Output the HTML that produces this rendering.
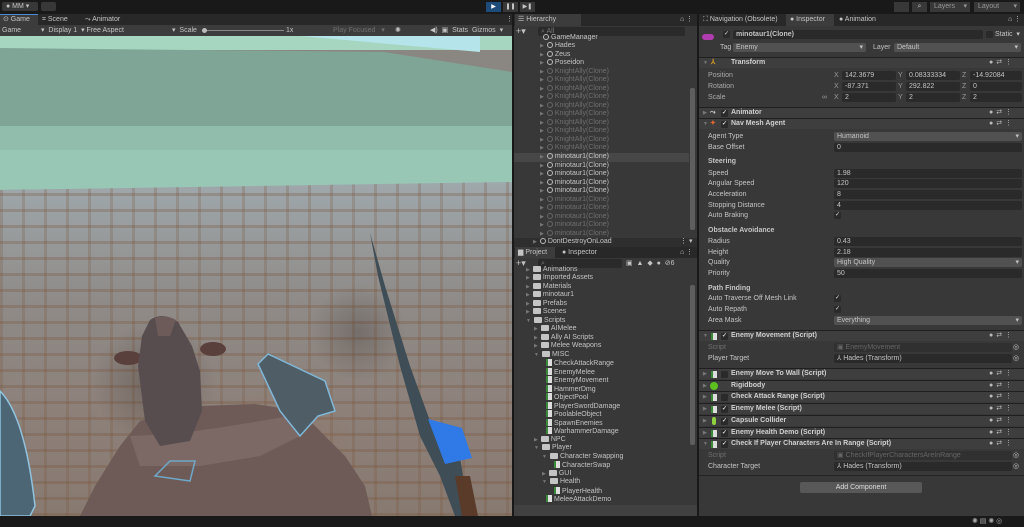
<!DOCTYPE html>
<html><head><meta charset="utf-8"><style>
*{margin:0;padding:0;box-sizing:border-box}
body{width:1024px;height:527px;overflow:hidden;background:#191919;font-family:"Liberation Sans",sans-serif;font-size:7px;color:#c4c4c4;position:relative}
.a{position:absolute;white-space:nowrap}
.r{position:absolute;height:8px;line-height:8px;white-space:nowrap}
.dim{color:#6f6f6f}
.fld{position:absolute;height:9px;background:#2a2a2a;border-radius:2px;line-height:9px;padding-left:3px;color:#c4c4c4}
.dd{background:#515151}
.hdr{position:absolute;left:699px;width:325px;height:11px;background:#3e3e3e;border-top:1px solid #1f1f1f;line-height:10px;font-weight:bold;color:#d0d0d0}
.ck{position:absolute;width:7px;height:7px;background:#2a2a2a;border-radius:1px;font-size:6px;line-height:7px;text-align:center;color:#ddd}
.ico{display:inline-block;width:6px;height:6px;border:1px solid #bbb;border-radius:50%;vertical-align:-1px;margin-right:2px}
.fo{display:inline-block;width:8px;height:6px;background:#c4c4c4;vertical-align:-1px;margin-right:2px;border-radius:1px}
.sc{display:inline-block;width:6px;height:7px;background:#ddd;vertical-align:-1px;margin-right:2px;border-left:2px solid #3a8a3a}
.tri{color:#777;font-size:5px;margin-right:3px}
.hb{position:absolute;left:290px;top:0;color:#bbb;font-weight:normal;letter-spacing:3px}
</style></head><body>
<!-- top toolbar -->
<div class="a" style="left:2px;top:2px;width:36px;height:9px;background:#383838;border-radius:2px;line-height:9px;padding-left:4px">● MM ▾</div>
<div class="a" style="left:41px;top:2px;width:15px;height:9px;background:#383838;border-radius:2px"></div>
<div class="a" style="left:486px;top:2px;width:15px;height:10px;background:#1e4c7a;color:#fff;text-align:center;line-height:10px;font-size:6px">▶</div>
<div class="a" style="left:503px;top:2px;width:15px;height:10px;background:#383838;text-align:center;line-height:10px;font-size:6px">❚❚</div>
<div class="a" style="left:520px;top:2px;width:15px;height:10px;background:#383838;text-align:center;line-height:10px;font-size:6px">▶❚</div>
<div class="a" style="left:894px;top:2px;width:15px;height:10px;background:#383838"></div>
<div class="a" style="left:912px;top:2px;width:15px;height:10px;background:#383838;text-align:center;line-height:10px">⌕</div>
<div class="a" style="left:930px;top:2px;width:40px;height:10px;background:#383838;line-height:10px;padding-left:4px;color:#999">Layers <span style="float:right;margin-right:3px">▾</span></div>
<div class="a" style="left:974px;top:2px;width:46px;height:10px;background:#383838;line-height:10px;padding-left:4px;color:#999">Layout <span style="float:right;margin-right:3px">▾</span></div>

<!-- Game panel -->
<div class="a" style="left:0;top:14px;width:512px;height:11px;background:#282828"></div>
<div class="a" style="left:0;top:14px;width:38px;height:11px;background:#3c3c3c;border-top:1px solid #4a8ad0;line-height:10px;padding-left:3px">⊙ Game</div>
<div class="a" style="left:42px;top:14px;line-height:11px">⌗ Scene</div>
<div class="a" style="left:85px;top:14px;line-height:11px">⤳ Animator</div>
<div class="a" style="left:506px;top:14px;line-height:11px">⋮</div>
<div class="a" style="left:0;top:25px;width:512px;height:11px;background:#3c3c3c;line-height:11px"></div>
<div class="a" style="left:2px;top:25px;line-height:11px">Game</div>
<div class="a" style="left:41px;top:25px;line-height:11px">▾ &nbsp;Display 1 &nbsp;▾ Free Aspect</div>
<div class="a" style="left:172px;top:25px;line-height:11px">▾ &nbsp;Scale</div>
<div class="a" style="left:202px;top:30px;width:82px;height:1px;background:#888"></div>
<div class="a" style="left:202px;top:28px;width:5px;height:5px;border-radius:50%;background:#bbb"></div>
<div class="a" style="left:286px;top:25px;line-height:11px">1x</div>
<div class="a dim" style="left:333px;top:25px;line-height:11px">Play Focused &nbsp;&nbsp;▾</div>
<div class="a" style="left:395px;top:25px;line-height:11px">✺</div>
<div class="a" style="left:430px;top:25px;line-height:11px">◀) &nbsp;▣ &nbsp;Stats &nbsp;Gizmos &nbsp;▾</div>
<!-- scene -->
<div class="a" style="left:0;top:36px;width:512px;height:480px;overflow:hidden;background:#8a8782">
 <div class="a" style="left:0;top:0;width:512px;height:14px;background:#a6d6c0"></div>
 <div class="a" style="left:300px;top:0;width:180px;height:16px;background:#b5e5ea;clip-path:polygon(0 0,100% 0,100% 100%,30% 30%)"></div>
 <div class="a" style="left:0;top:12px;width:512px;height:80px;background:#7fa596;clip-path:polygon(0 0,75% 5%,100% 30%,100% 100%,0 100%)"></div>
 <div class="a" style="left:0;top:90px;width:512px;height:24px;background:#90bdac"></div>
 <div class="a" style="left:0;top:114px;width:512px;height:40px;background:#99c7b5;clip-path:polygon(0 0,100% 0,100% 85%,0 100%)"></div>
 <div class="a" style="left:0;top:146px;width:512px;height:334px;background:
  radial-gradient(circle at 30% 60%,rgba(60,50,45,.35),transparent 15%),
  radial-gradient(circle at 70% 45%,rgba(60,50,45,.3),transparent 12%),
  radial-gradient(circle at 55% 85%,rgba(150,100,70,.35),transparent 20%),
  repeating-linear-gradient(90deg,rgba(120,85,60,.25) 0 3px,transparent 3px 22px),
  repeating-linear-gradient(0deg,rgba(120,85,60,.3) 0 3px,transparent 3px 16px),
  linear-gradient(#9fa8ac,#8f8b88 35%,#8d8079 70%,#887a70);clip-path:polygon(0 8px,100% 0,100% 100%,0 100%)"></div>
 <svg class="a" style="left:0;top:0" width="512" height="480">
  <path d="M80 480 L95 450 L120 410 L140 385 L200 370 L255 368 L300 375 L320 395 L345 420 L365 450 L372 480 Z" fill="#6e5b57"/>
  <path d="M130 400 L175 398 L230 390 L290 380 L300 400 L260 420 L200 430 L140 430 Z" fill="#7c6965"/>
  <ellipse cx="128" cy="322" rx="14" ry="7" fill="#5a403c"/>
  <ellipse cx="213" cy="313" rx="13" ry="7" fill="#5a403c"/>
  <path d="M150 284 Q163 275 178 286 L192 310 L200 335 L202 375 L190 405 L160 410 L145 385 L138 330 L142 300 Z" fill="#574d4f"/>
  <path d="M155 282 Q165 278 176 284 L170 300 L158 300 Z" fill="#6d5b5a"/>
  <path d="M258 328 L268 318 L325 345 L335 375 L318 380 L300 400 L280 375 Z" fill="#4e5d66" stroke="#7fb8d8" stroke-width="1.5"/>
  <path d="M155 440 L170 425 L195 425 L190 445 Z" fill="none" stroke="#6fa7c8" stroke-width="1.5"/>
  <path d="M0 355 Q25 380 35 470 L30 480 L0 480 Z" fill="#4d6675" stroke="#8fc3de" stroke-width="1.5"/>
  <path d="M370 197 L385 250 L410 330 L430 385 L458 410 L470 480 L455 480 L440 440 L420 400 L400 330 L378 240 Z" fill="#3f4d56"/>
  <path d="M428 383 L462 392 L472 422 L445 428 Z" fill="#2f7ae6"/>
  <path d="M455 440 L470 440 L478 480 L462 480 Z" fill="#5a3a28"/>
 </svg>
</div>

<!-- divider -->
<div class="a" style="left:512px;top:14px;width:2px;height:502px;background:#191919"></div>
<!-- Hierarchy -->
<div class="a" style="left:514px;top:14px;width:183px;height:232px;background:#383838"></div>
<div class="a" style="left:514px;top:14px;width:183px;height:12px;background:#282828"></div>
<div class="a" style="left:515px;top:14px;width:66px;height:12px;background:#3c3c3c;line-height:12px;padding-left:3px">☰ Hierarchy</div>
<div class="a" style="left:680px;top:14px;line-height:12px">⌂ ⋮</div>
<div class="a" style="left:516px;top:27px;line-height:9px;font-size:9px">+▾</div>
<div class="a" style="left:538px;top:27px;width:147px;height:9px;background:#2a2a2a;border-radius:2px;line-height:9px;padding-left:3px;color:#777">⌕ All</div>
<div class="a" style="left:690px;top:40px;width:5px;height:200px"><div style="margin-top:48px;height:142px;background:#5e5e5e;border-radius:2px"></div></div>
<div class="a" style="left:514px;top:153px;width:175px;height:9px;background:#474747"></div>
<div class="r" style="left:540px;top:34px"><span class="tri"> </span><span class="ico"></span>GameManager</div>
<div class="r" style="left:540px;top:42px"><span class="tri">▶</span><span class="ico"></span>Hades</div>
<div class="r" style="left:540px;top:51px"><span class="tri">▶</span><span class="ico"></span>Zeus</div>
<div class="r" style="left:540px;top:59px"><span class="tri">▶</span><span class="ico"></span>Poseidon</div>
<div class="r dim" style="left:540px;top:68px"><span class="tri">▶</span><span class="ico" style="border-color:#666"></span>KnightAlly(Clone)</div>
<div class="r dim" style="left:540px;top:76px"><span class="tri">▶</span><span class="ico" style="border-color:#666"></span>KnightAlly(Clone)</div>
<div class="r dim" style="left:540px;top:85px"><span class="tri">▶</span><span class="ico" style="border-color:#666"></span>KnightAlly(Clone)</div>
<div class="r dim" style="left:540px;top:93px"><span class="tri">▶</span><span class="ico" style="border-color:#666"></span>KnightAlly(Clone)</div>
<div class="r dim" style="left:540px;top:102px"><span class="tri">▶</span><span class="ico" style="border-color:#666"></span>KnightAlly(Clone)</div>
<div class="r dim" style="left:540px;top:110px"><span class="tri">▶</span><span class="ico" style="border-color:#666"></span>KnightAlly(Clone)</div>
<div class="r dim" style="left:540px;top:119px"><span class="tri">▶</span><span class="ico" style="border-color:#666"></span>KnightAlly(Clone)</div>
<div class="r dim" style="left:540px;top:127px"><span class="tri">▶</span><span class="ico" style="border-color:#666"></span>KnightAlly(Clone)</div>
<div class="r dim" style="left:540px;top:136px"><span class="tri">▶</span><span class="ico" style="border-color:#666"></span>KnightAlly(Clone)</div>
<div class="r dim" style="left:540px;top:144px"><span class="tri">▶</span><span class="ico" style="border-color:#666"></span>KnightAlly(Clone)</div>
<div class="r" style="left:540px;top:153px"><span class="tri">▶</span><span class="ico"></span>minotaur1(Clone)</div>
<div class="r" style="left:540px;top:162px"><span class="tri">▶</span><span class="ico"></span>minotaur1(Clone)</div>
<div class="r" style="left:540px;top:170px"><span class="tri">▶</span><span class="ico"></span>minotaur1(Clone)</div>
<div class="r" style="left:540px;top:179px"><span class="tri">▶</span><span class="ico"></span>minotaur1(Clone)</div>
<div class="r" style="left:540px;top:187px"><span class="tri">▶</span><span class="ico"></span>minotaur1(Clone)</div>
<div class="r dim" style="left:540px;top:196px"><span class="tri">▶</span><span class="ico" style="border-color:#666"></span>minotaur1(Clone)</div>
<div class="r dim" style="left:540px;top:204px"><span class="tri">▶</span><span class="ico" style="border-color:#666"></span>minotaur1(Clone)</div>
<div class="r dim" style="left:540px;top:213px"><span class="tri">▶</span><span class="ico" style="border-color:#666"></span>minotaur1(Clone)</div>
<div class="r dim" style="left:540px;top:221px"><span class="tri">▶</span><span class="ico" style="border-color:#666"></span>minotaur1(Clone)</div>
<div class="r dim" style="left:540px;top:230px"><span class="tri">▶</span><span class="ico" style="border-color:#666"></span>minotaur1(Clone)</div>
<div class="a" style="left:514px;top:238px;width:183px;height:9px;background:#2e2e2e"></div>
<div class="r" style="left:533px;top:238px"><span class="tri">▶</span><span class="ico"></span>DontDestroyOnLoad</div>
<div class="a" style="left:680px;top:238px;line-height:8px">⋮ ▾</div>

<!-- Project -->
<div class="a" style="left:514px;top:247px;width:183px;height:269px;background:#383838"></div>
<div class="a" style="left:514px;top:247px;width:183px;height:11px;background:#282828"></div>
<div class="a" style="left:515px;top:247px;width:40px;height:11px;background:#3c3c3c;line-height:11px;padding-left:3px">▆ Project</div>
<div class="a" style="left:562px;top:247px;line-height:11px">● Inspector</div>
<div class="a" style="left:680px;top:247px;line-height:11px">⌂ ⋮</div>
<div class="a" style="left:516px;top:259px;line-height:9px;font-size:9px">+▾</div>
<div class="a" style="left:538px;top:259px;width:84px;height:9px;background:#2a2a2a;border-radius:2px;line-height:9px;padding-left:3px;color:#777">⌕</div>
<div class="a" style="left:626px;top:259px;line-height:9px">▣ &nbsp;▲ &nbsp;◆ &nbsp;● &nbsp;⊘6</div>
<div class="a" style="left:690px;top:285px;width:5px;height:160px;background:#5e5e5e;border-radius:2px"></div>
<div class="r" style="left:526px;top:266px"><span class="tri">▶</span><span class="fo"></span>Animations</div>
<div class="r" style="left:526px;top:274px"><span class="tri">▶</span><span class="fo"></span>Imported Assets</div>
<div class="r" style="left:526px;top:283px"><span class="tri">▶</span><span class="fo"></span>Materials</div>
<div class="r" style="left:526px;top:291px"><span class="tri">▶</span><span class="fo"></span>minotaur1</div>
<div class="r" style="left:526px;top:300px"><span class="tri">▶</span><span class="fo"></span>Prefabs</div>
<div class="r" style="left:526px;top:308px"><span class="tri">▶</span><span class="fo"></span>Scenes</div>
<div class="r" style="left:526px;top:317px"><span class="tri">▼</span><span class="fo"></span>Scripts</div>
<div class="r" style="left:534px;top:325px"><span class="tri">▶</span><span class="fo"></span>AIMelee</div>
<div class="r" style="left:534px;top:334px"><span class="tri">▶</span><span class="fo"></span>Ally AI Scripts</div>
<div class="r" style="left:534px;top:342px"><span class="tri">▶</span><span class="fo"></span>Melee Weapons</div>
<div class="r" style="left:534px;top:351px"><span class="tri">▼</span><span class="fo"></span>MISC</div>
<div class="r" style="left:546px;top:359px"><span class="sc"></span>CheckAttackRange</div>
<div class="r" style="left:546px;top:368px"><span class="sc"></span>EnemyMelee</div>
<div class="r" style="left:546px;top:376px"><span class="sc"></span>EnemyMovement</div>
<div class="r" style="left:546px;top:385px"><span class="sc"></span>HammerDmg</div>
<div class="r" style="left:546px;top:393px"><span class="sc"></span>ObjectPool</div>
<div class="r" style="left:546px;top:402px"><span class="sc"></span>PlayerSwordDamage</div>
<div class="r" style="left:546px;top:410px"><span class="sc"></span>PoolableObject</div>
<div class="r" style="left:546px;top:419px"><span class="sc"></span>SpawnEnemies</div>
<div class="r" style="left:546px;top:427px"><span class="sc"></span>WarhammerDamage</div>
<div class="r" style="left:534px;top:436px"><span class="tri">▶</span><span class="fo"></span>NPC</div>
<div class="r" style="left:534px;top:444px"><span class="tri">▼</span><span class="fo"></span>Player</div>
<div class="r" style="left:542px;top:453px"><span class="tri">▼</span><span class="fo"></span>Character Swapping</div>
<div class="r" style="left:554px;top:461px"><span class="sc"></span>CharacterSwap</div>
<div class="r" style="left:542px;top:470px"><span class="tri">▶</span><span class="fo"></span>GUI</div>
<div class="r" style="left:542px;top:478px"><span class="tri">▼</span><span class="fo"></span>Health</div>
<div class="r" style="left:554px;top:487px"><span class="sc"></span>PlayerHealth</div>
<div class="r" style="left:546px;top:495px"><span class="sc"></span>MeleeAttackDemo</div>
<div class="a" style="left:514px;top:505px;width:183px;height:11px;background:#414141"></div>

<div class="a" style="left:697px;top:14px;width:2px;height:502px;background:#191919"></div>
<!-- Inspector -->
<div class="a" style="left:699px;top:14px;width:325px;height:502px;background:#383838"></div>
<div class="a" style="left:699px;top:14px;width:325px;height:12px;background:#282828"></div>
<div class="a" style="left:703px;top:14px;line-height:12px">⛶ Navigation (Obsolete)</div>
<div class="a" style="left:786px;top:14px;width:48px;height:12px;background:#3c3c3c;line-height:12px;padding-left:4px">● Inspector</div>
<div class="a" style="left:839px;top:14px;line-height:12px">● Animation</div>
<div class="a" style="left:1008px;top:14px;line-height:12px">⌂ ⋮</div>
<div class="a" style="left:702px;top:34px;width:12px;height:6px;border-radius:3px;background:#b03cb0"></div>
<div class="ck" style="left:723px;top:31px">✓</div>
<div class="fld" style="left:733px;top:30px;width:250px;font-weight:bold">minotaur1(Clone)</div>
<div class="ck" style="left:986px;top:31px"></div>
<div class="a" style="left:995px;top:30px;line-height:9px">Static &nbsp;▾</div>
<div class="a" style="left:720px;top:43px;line-height:9px">Tag</div>
<div class="fld dd" style="left:733px;top:43px;width:133px">Enemy<span style="float:right;margin-right:3px">▾</span></div>
<div class="a" style="left:873px;top:43px;line-height:9px">Layer</div>
<div class="fld dd" style="left:894px;top:43px;width:127px">Default<span style="float:right;margin-right:3px">▾</span></div>

<div class="hdr" style="top:57px"><span class="a" style="left:4px;color:#777;font-size:5px">▼</span><span class="a" style="left:12px;color:#e0a020">⅄</span><span class="a" style="left:32px">Transform</span><span class="hb">●⇄⋮</span></div>
<div class="a" style="left:708px;top:72px;line-height:8px;color:#aaa">Position</div>
<div class="a" style="left:708px;top:83px;line-height:8px;color:#aaa">Rotation</div>
<div class="a" style="left:708px;top:94px;line-height:8px;color:#aaa">Scale</div>
<div class="a" style="left:822px;top:94px;line-height:8px;color:#999">∞</div>
<div class="a" style="left:834px;top:72px;line-height:8px;color:#999">X</div><div class="fld" style="left:842px;top:71px;width:54px">142.3679</div>
<div class="a" style="left:898px;top:72px;line-height:8px;color:#999">Y</div><div class="fld" style="left:906px;top:71px;width:54px">0.08333334</div>
<div class="a" style="left:962px;top:72px;line-height:8px;color:#999">Z</div><div class="fld" style="left:970px;top:71px;width:52px">-14.92084</div>
<div class="a" style="left:834px;top:83px;line-height:8px;color:#999">X</div><div class="fld" style="left:842px;top:82px;width:54px">-87.371</div>
<div class="a" style="left:898px;top:83px;line-height:8px;color:#999">Y</div><div class="fld" style="left:906px;top:82px;width:54px">292.822</div>
<div class="a" style="left:962px;top:83px;line-height:8px;color:#999">Z</div><div class="fld" style="left:970px;top:82px;width:52px">0</div>
<div class="a" style="left:834px;top:94px;line-height:8px;color:#999">X</div><div class="fld" style="left:842px;top:93px;width:54px">2</div>
<div class="a" style="left:898px;top:94px;line-height:8px;color:#999">Y</div><div class="fld" style="left:906px;top:93px;width:54px">2</div>
<div class="a" style="left:962px;top:94px;line-height:8px;color:#999">Z</div><div class="fld" style="left:970px;top:93px;width:52px">2</div>

<div class="hdr" style="top:107px"><span class="a" style="left:4px;color:#777;font-size:5px">▶</span><span class="a" style="left:11px">⤳</span><span class="ck" style="left:22px;top:2px">✓</span><span class="a" style="left:32px">Animator</span><span class="hb">●⇄⋮</span></div>
<div class="hdr" style="top:118px"><span class="a" style="left:4px;color:#777;font-size:5px">▼</span><span class="a" style="left:11px;color:#e06a30">✦</span><span class="ck" style="left:22px;top:2px">✓</span><span class="a" style="left:32px">Nav Mesh Agent</span><span class="hb">●⇄⋮</span></div>
<div class="a" style="left:708px;top:133px;line-height:8px">Agent Type</div><div class="fld dd" style="left:834px;top:132px;width:188px">Humanoid<span style="float:right;margin-right:3px">▾</span></div>
<div class="a" style="left:708px;top:144px;line-height:8px">Base Offset</div><div class="fld" style="left:834px;top:143px;width:188px">0</div>
<div class="a" style="left:708px;top:158px;line-height:8px;font-weight:bold">Steering</div>
<div class="a" style="left:708px;top:170px;line-height:8px">Speed</div><div class="fld" style="left:834px;top:169px;width:188px">1.98</div>
<div class="a" style="left:708px;top:180px;line-height:8px">Angular Speed</div><div class="fld" style="left:834px;top:179px;width:188px">120</div>
<div class="a" style="left:708px;top:191px;line-height:8px">Acceleration</div><div class="fld" style="left:834px;top:190px;width:188px">8</div>
<div class="a" style="left:708px;top:202px;line-height:8px">Stopping Distance</div><div class="fld" style="left:834px;top:201px;width:188px">4</div>
<div class="a" style="left:708px;top:212px;line-height:8px">Auto Braking</div><div class="ck" style="left:834px;top:212px">✓</div>
<div class="a" style="left:708px;top:227px;line-height:8px;font-weight:bold">Obstacle Avoidance</div>
<div class="a" style="left:708px;top:238px;line-height:8px">Radius</div><div class="fld" style="left:834px;top:237px;width:188px">0.43</div>
<div class="a" style="left:708px;top:249px;line-height:8px">Height</div><div class="fld" style="left:834px;top:248px;width:188px">2.18</div>
<div class="a" style="left:708px;top:259px;line-height:8px">Quality</div><div class="fld dd" style="left:834px;top:258px;width:188px">High Quality<span style="float:right;margin-right:3px">▾</span></div>
<div class="a" style="left:708px;top:270px;line-height:8px">Priority</div><div class="fld" style="left:834px;top:269px;width:188px">50</div>
<div class="a" style="left:708px;top:285px;line-height:8px;font-weight:bold">Path Finding</div>
<div class="a" style="left:708px;top:295px;line-height:8px">Auto Traverse Off Mesh Link</div><div class="ck" style="left:834px;top:295px">✓</div>
<div class="a" style="left:708px;top:306px;line-height:8px">Auto Repath</div><div class="ck" style="left:834px;top:306px">✓</div>
<div class="a" style="left:708px;top:317px;line-height:8px">Area Mask</div><div class="fld dd" style="left:834px;top:316px;width:188px">Everything<span style="float:right;margin-right:3px">▾</span></div>

<div class="hdr" style="top:330px"><span class="a" style="left:4px;color:#777;font-size:5px">▼</span><span class="sc a" style="left:12px;top:2px"></span><span class="ck" style="left:22px;top:2px">✓</span><span class="a" style="left:32px">Enemy Movement (Script)</span><span class="hb">●⇄⋮</span></div>
<div class="a dim" style="left:708px;top:344px;line-height:8px">Script</div><div class="fld" style="left:834px;top:343px;width:178px;color:#666;background:#303030">▣ EnemyMovement</div><div class="a" style="left:1013px;top:343px;line-height:9px">◎</div>
<div class="a" style="left:708px;top:355px;line-height:8px">Player Target</div><div class="fld" style="left:834px;top:354px;width:178px">⅄ Hades (Transform)</div><div class="a" style="left:1013px;top:354px;line-height:9px">◎</div>

<div class="hdr" style="top:368px"><span class="a" style="left:4px;color:#777;font-size:5px">▶</span><span class="sc a" style="left:12px;top:2px"></span><span class="ck" style="left:22px;top:2px"></span><span class="a" style="left:32px">Enemy Move To Wall (Script)</span><span class="hb">●⇄⋮</span></div>
<div class="hdr" style="top:380px"><span class="a" style="left:4px;color:#777;font-size:5px">▶</span><span class="a" style="left:11px;width:8px;height:8px;top:1px;border-radius:50%;background:#5cc020"></span><span class="a" style="left:32px">Rigidbody</span><span class="hb">●⇄⋮</span></div>
<div class="hdr" style="top:391px"><span class="a" style="left:4px;color:#777;font-size:5px">▶</span><span class="sc a" style="left:12px;top:2px"></span><span class="ck" style="left:22px;top:2px"></span><span class="a" style="left:32px">Check Attack Range (Script)</span><span class="hb">●⇄⋮</span></div>
<div class="hdr" style="top:403px"><span class="a" style="left:4px;color:#777;font-size:5px">▶</span><span class="sc a" style="left:12px;top:2px"></span><span class="ck" style="left:22px;top:2px">✓</span><span class="a" style="left:32px">Enemy Melee (Script)</span><span class="hb">●⇄⋮</span></div>
<div class="hdr" style="top:415px"><span class="a" style="left:4px;color:#777;font-size:5px">▶</span><span class="a" style="left:13px;top:1px;width:4px;height:8px;border-radius:2px;background:#8fd040"></span><span class="ck" style="left:22px;top:2px">✓</span><span class="a" style="left:32px">Capsule Collider</span><span class="hb">●⇄⋮</span></div>
<div class="hdr" style="top:427px"><span class="a" style="left:4px;color:#777;font-size:5px">▶</span><span class="sc a" style="left:12px;top:2px"></span><span class="ck" style="left:22px;top:2px">✓</span><span class="a" style="left:32px">Enemy Health Demo (Script)</span><span class="hb">●⇄⋮</span></div>
<div class="hdr" style="top:438px"><span class="a" style="left:4px;color:#777;font-size:5px">▼</span><span class="sc a" style="left:12px;top:2px"></span><span class="ck" style="left:22px;top:2px">✓</span><span class="a" style="left:32px">Check If Player Characters Are In Range (Script)</span><span class="hb">●⇄⋮</span></div>
<div class="a dim" style="left:708px;top:452px;line-height:8px">Script</div><div class="fld" style="left:834px;top:451px;width:178px;color:#666;background:#303030">▣ CheckIfPlayerCharactersAreInRange</div><div class="a" style="left:1013px;top:451px;line-height:9px">◎</div>
<div class="a" style="left:708px;top:463px;line-height:8px">Character Target</div><div class="fld" style="left:834px;top:462px;width:178px">⅄ Hades (Transform)</div><div class="a" style="left:1013px;top:462px;line-height:9px">◎</div>
<div class="a" style="left:699px;top:475px;width:325px;height:1px;background:#232323"></div>
<div class="a" style="left:800px;top:482px;width:122px;height:11px;background:#585858;border-radius:2px;text-align:center;line-height:11px;color:#ddd">Add Component</div>
<!-- status -->
<div class="a" style="left:972px;top:517px;line-height:10px;color:#aaa">✺ ▤ ✺ ◎</div>
</body></html>
